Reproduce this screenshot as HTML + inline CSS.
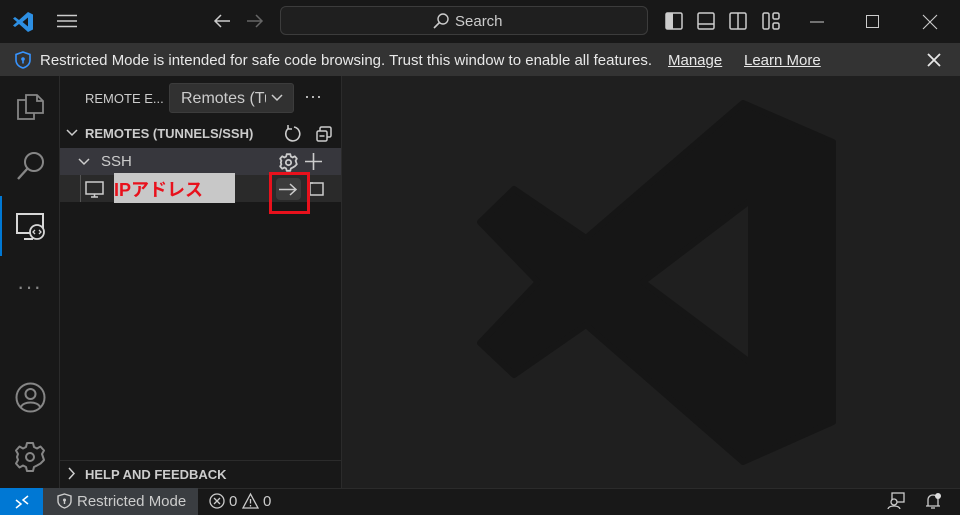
<!DOCTYPE html>
<html><head><meta charset="utf-8"><style>
*{margin:0;padding:0;box-sizing:border-box}
body{width:960px;height:515px;overflow:hidden;background:#1f1f1f;font-family:"Liberation Sans","Noto Sans CJK JP",sans-serif;color:#ccc;position:relative}
.a{position:absolute}
svg{position:absolute;overflow:visible}
</style></head><body>
<!-- title bar -->
<div class="a" style="left:0;top:0;width:960px;height:43px;background:#181818"></div>
<svg style="left:12px;top:11px" width="22" height="22" viewBox="0 0 22 22"><path d="M16 1 L21 3.5 V18.5 L16 21 L7 13 L3 16 L1 14.5 L5 11 L1 7.5 L3 6 L7 9 Z M16 6.5 L10.5 11 L16 15.5 Z" fill="#2d8fe3" fill-rule="evenodd"/></svg>
<svg style="left:57px;top:14px" width="20" height="14"><path d="M0 1.5H20M0 7H20M0 12.5H20" stroke="#ccc" stroke-width="1.6"/></svg>
<svg style="left:213px;top:14px" width="18" height="14"><path d="M17 7H2M8 1L2 7L8 13" stroke="#ccc" stroke-width="1.5" fill="none"/></svg>
<svg style="left:246px;top:14px" width="18" height="14"><path d="M1 7H16M10 1L16 7L10 13" stroke="#666" stroke-width="1.5" fill="none"/></svg>
<div class="a" style="left:280px;top:6px;width:368px;height:29px;border:1px solid #3c3c3c;border-radius:6px;background:#1f1f1f"></div>
<svg style="left:433px;top:13px" width="16" height="16"><circle cx="10" cy="6" r="5" stroke="#ccc" stroke-width="1.4" fill="none"/><path d="M6.5 9.5L1 15" stroke="#ccc" stroke-width="1.6"/></svg>
<div class="a" style="left:455px;top:13px;font-size:15px;color:#ccc">Search</div>
<svg style="left:665px;top:12px" width="18" height="18"><rect x="1" y="1" width="16" height="16" rx="1.5" stroke="#ccc" stroke-width="1.5" fill="none"/><rect x="1" y="1" width="7" height="16" fill="#ccc"/></svg>
<svg style="left:697px;top:12px" width="18" height="18"><rect x="1" y="1" width="16" height="16" rx="1.5" stroke="#ccc" stroke-width="1.5" fill="none"/><path d="M1 12H17" stroke="#ccc" stroke-width="1.5"/></svg>
<svg style="left:729px;top:12px" width="18" height="18"><rect x="1" y="1" width="16" height="16" rx="1.5" stroke="#ccc" stroke-width="1.5" fill="none"/><path d="M9 1V17" stroke="#ccc" stroke-width="1.5"/></svg>
<svg style="left:762px;top:12px" width="18" height="18"><rect x="1" y="1" width="6" height="16" rx="1.5" stroke="#ccc" stroke-width="1.5" fill="none"/><rect x="11" y="1" width="6" height="6" rx="1.5" stroke="#ccc" stroke-width="1.5" fill="none"/><rect x="11" y="11" width="6" height="6" rx="1.5" stroke="#ccc" stroke-width="1.5" fill="none"/></svg>
<svg style="left:810px;top:21px" width="14" height="2"><path d="M0 1H14" stroke="#ccc" stroke-width="1"/></svg>
<svg style="left:866px;top:15px" width="13" height="13"><rect x="0.5" y="0.5" width="12" height="12" stroke="#ccc" fill="none"/></svg>
<svg style="left:923px;top:15px" width="14" height="14"><path d="M0 0L14 14M14 0L0 14" stroke="#ccc" stroke-width="1.1"/></svg>
<!-- banner -->
<div class="a" style="left:0;top:43px;width:960px;height:33px;background:#333"></div>
<svg style="left:14px;top:51px" width="18" height="18"><path d="M9 1L16 3.5V9C16 13 13 16 9 17C5 16 2 13 2 9V3.5Z" stroke="#3794ff" stroke-width="1.6" fill="none"/><circle cx="9" cy="8" r="1.8" fill="#3794ff"/><path d="M9 9V12.5" stroke="#3794ff" stroke-width="1.6"/></svg>
<div class="a" style="left:40px;top:52px;font-size:15px;color:#e8e8e8">Restricted Mode is intended for safe code browsing. Trust this window to enable all features.</div>
<div class="a" style="left:668px;top:52px;font-size:15px;color:#e8e8e8;text-decoration:underline">Manage</div>
<div class="a" style="left:744px;top:52px;font-size:15px;color:#e8e8e8;text-decoration:underline">Learn More</div>
<svg style="left:928px;top:54px" width="12" height="12"><path d="M0 0L12 12M12 0L0 12" stroke="#e8e8e8" stroke-width="1.8"/></svg>
<!-- activity bar -->
<div class="a" style="left:0;top:76px;width:60px;height:412px;background:#181818;border-right:1px solid #2b2b2b"></div>
<svg style="left:16px;top:90px" width="28" height="30"><path d="M10 5H21L27 11V23H10Z M21 5V11H27" stroke="#868686" stroke-width="1.8" fill="none"/><path d="M10 10H2V29H18V23" stroke="#868686" stroke-width="1.8" fill="none"/></svg>
<svg style="left:16px;top:150px" width="30" height="32"><circle cx="18" cy="12" r="9" stroke="#868686" stroke-width="2" fill="none"/><path d="M11.5 18.5L2 29" stroke="#868686" stroke-width="2.4"/></svg>
<div class="a" style="left:0;top:196px;width:2px;height:60px;background:#0078d4"></div>
<svg style="left:16px;top:212px" width="30" height="30"><rect x="1" y="2" width="26" height="19" stroke="#d7d7d7" stroke-width="2" fill="none"/><path d="M8 27H17" stroke="#d7d7d7" stroke-width="2"/><circle cx="21" cy="20" r="7" fill="#181818" stroke="#d7d7d7" stroke-width="1.8"/><path d="M19 18L17 20L19 22M23 18L25 20L23 22" stroke="#d7d7d7" stroke-width="1.3" fill="none"/></svg>
<div class="a" style="left:17px;top:274px;font-size:22px;color:#868686;letter-spacing:1px">···</div>
<svg style="left:15px;top:382px" width="31" height="31"><circle cx="15.5" cy="15.5" r="14" stroke="#868686" stroke-width="2" fill="none"/><circle cx="15.5" cy="12" r="5" stroke="#868686" stroke-width="2" fill="none"/><path d="M6 25C8 19 23 19 25 25" stroke="#868686" stroke-width="2" fill="none"/></svg>
<svg style="left:14px;top:441px" width="32" height="32" viewBox="0 0 32 32"><path d="M13 2H19L20 6L23 7.5L26.5 5.5L30 9.5L28 13L29 16L30 19L26.5 22.5L23 24.5L20 26L19 30H13L12 26L9 24.5L5.5 26.5L2 22.5L4 19L3 16L4 13L2 9.5L5.5 5.5L9 7.5L12 6Z" stroke="#868686" stroke-width="2" fill="none" stroke-linejoin="round"/><circle cx="16" cy="16" r="4" stroke="#868686" stroke-width="2" fill="none"/></svg>
<!-- sidebar -->
<div class="a" style="left:60px;top:76px;width:282px;height:412px;background:#181818;border-right:1px solid #2b2b2b"></div>
<div class="a" style="left:85px;top:91px;font-size:13px;color:#ccc">REMOTE E...</div>
<div class="a" style="left:169px;top:83px;width:125px;height:30px;background:#313131;border:1px solid #3c3c3c;border-radius:3px;overflow:hidden"><span style="position:absolute;left:11px;top:6px;font-size:16px;color:#ccc;white-space:nowrap;width:85px;overflow:hidden">Remotes (Tunnels</span></div>
<svg style="left:271px;top:94px" width="12" height="8"><path d="M1 1L6 6L11 1" stroke="#ccc" stroke-width="1.5" fill="none"/></svg>
<div class="a" style="left:304px;top:86px;font-size:18px;color:#ccc">···</div>
<svg style="left:66px;top:129px" width="12" height="8"><path d="M1 1L6 6L11 1" stroke="#ccc" stroke-width="1.5" fill="none"/></svg>
<div class="a" style="left:85px;top:126px;font-size:13px;font-weight:bold;color:#ccc">REMOTES (TUNNELS/SSH)</div>
<svg style="left:285px;top:125px" width="16" height="17"><path d="M4 3A7 7 0 1 0 9 2" stroke="#ccc" stroke-width="1.6" fill="none"/><path d="M3 0V4H7" stroke="#ccc" stroke-width="1.5" fill="none"/></svg>
<svg style="left:316px;top:126px" width="16" height="16"><rect x="4" y="1" width="11" height="10" rx="1.5" stroke="#ccc" stroke-width="1.5" fill="none"/><rect x="1" y="5" width="10" height="10" rx="1.5" stroke="#ccc" stroke-width="1.5" fill="#181818"/><path d="M3.5 10H8.5" stroke="#ccc" stroke-width="1.5"/></svg>
<div class="a" style="left:60px;top:148px;width:281px;height:27px;background:#37373d"></div>
<svg style="left:78px;top:158px" width="12" height="8"><path d="M1 1L6 6L11 1" stroke="#ccc" stroke-width="1.5" fill="none"/></svg>
<div class="a" style="left:101px;top:153px;font-size:15px;color:#ccc">SSH</div>
<svg style="left:279px;top:153px" width="19" height="19" viewBox="0 0 32 32"><path d="M13 2H19L20 6L23 7.5L26.5 5.5L30 9.5L28 13L29 16L30 19L26.5 22.5L23 24.5L20 26L19 30H13L12 26L9 24.5L5.5 26.5L2 22.5L4 19L3 16L4 13L2 9.5L5.5 5.5L9 7.5L12 6Z" stroke="#ccc" stroke-width="3" fill="none" stroke-linejoin="round"/><circle cx="16" cy="16" r="4.5" stroke="#ccc" stroke-width="3" fill="none"/></svg>
<svg style="left:305px;top:153px" width="17" height="17"><path d="M8.5 0V17M0 8.5H17" stroke="#ccc" stroke-width="1.6"/></svg>
<div class="a" style="left:60px;top:175px;width:281px;height:27px;background:#2a2a2a"></div>
<div class="a" style="left:80px;top:175px;width:1px;height:27px;background:#555"></div>
<svg style="left:85px;top:181px" width="19" height="17"><rect x="1" y="1" width="17" height="12" stroke="#ccc" stroke-width="1.5" fill="none"/><path d="M6 16H13M9.5 13V16" stroke="#ccc" stroke-width="1.5"/></svg>
<div class="a" style="left:114px;top:173px;width:121px;height:30px;background:#c8c8c8"></div>
<div class="a" style="left:114px;top:176px;font-size:18px;font-weight:bold;color:#e8111c">IPアドレス</div>
<div class="a" style="left:276px;top:178px;width:25px;height:22px;background:#3c3c3c;border-radius:4px"></div>
<svg style="left:279px;top:183px" width="19" height="13"><path d="M0 6.5H17M11 1L17 6.5L11 12" stroke="#ccc" stroke-width="1.5" fill="none"/></svg>
<svg style="left:306px;top:181px" width="18" height="16"><rect x="4" y="2" width="13" height="12" stroke="#ccc" stroke-width="1.5" fill="none"/><path d="M1 2H7" stroke="#ccc" stroke-width="1.5"/></svg>
<div class="a" style="left:269px;top:172px;width:41px;height:42px;border:3px solid #e8111c"></div>
<div class="a" style="left:60px;top:460px;width:281px;height:1px;background:#2b2b2b"></div>
<svg style="left:68px;top:467px" width="8" height="13"><path d="M1 1L6 6.5L1 12" stroke="#ccc" stroke-width="1.5" fill="none"/></svg>
<div class="a" style="left:85px;top:467px;font-size:13px;font-weight:bold;color:#ccc">HELP AND FEEDBACK</div>
<!-- editor logo -->
<svg style="left:0;top:0" width="960" height="515"><path d="M743 103L833 142V422L743 462L586 325L514 375L480 343L538 282L480 222L514 189L586 238Z M751 200L643 282L751 363Z" fill="#161616" fill-rule="evenodd" stroke="#161616" stroke-width="6" stroke-linejoin="round"/></svg>
<!-- status bar -->
<div class="a" style="left:0;top:488px;width:960px;height:27px;background:#181818;border-top:1px solid #2b2b2b"></div>
<div class="a" style="left:0;top:488px;width:43px;height:27px;background:#0078d4"></div>
<svg style="left:15px;top:495px" width="14" height="14"><path d="M1 13L6 9L1 5M13 1L8 5L13 9" stroke="#fff" stroke-width="1.5" fill="none"/></svg>
<div class="a" style="left:43px;top:488px;width:155px;height:27px;background:#3a3d41"></div>
<svg style="left:57px;top:493px" width="15" height="16"><path d="M7.5 1L14 3V8C14 11.5 11 14 7.5 15C4 14 1 11.5 1 8V3Z" stroke="#ccc" stroke-width="1.4" fill="none"/><circle cx="7.5" cy="7" r="1.5" fill="#ccc"/><path d="M7.5 8V11" stroke="#ccc" stroke-width="1.4"/></svg>
<div class="a" style="left:77px;top:493px;font-size:15px;color:#ccc">Restricted Mode</div>
<svg style="left:209px;top:493px" width="16" height="16"><circle cx="8" cy="8" r="7" stroke="#ccc" stroke-width="1.3" fill="none"/><path d="M5 5L11 11M11 5L5 11" stroke="#ccc" stroke-width="1.3"/></svg>
<div class="a" style="left:229px;top:493px;font-size:15px;color:#ccc">0</div>
<svg style="left:242px;top:493px" width="17" height="16"><path d="M8.5 1L16 15H1Z" stroke="#ccc" stroke-width="1.3" fill="none"/><path d="M8.5 6V10.5M8.5 12V13.5" stroke="#ccc" stroke-width="1.3"/></svg>
<div class="a" style="left:263px;top:493px;font-size:15px;color:#ccc">0</div>
<svg style="left:887px;top:492px" width="18" height="18"><rect x="5" y="1" width="12" height="9" stroke="#ccc" stroke-width="1.3" fill="none"/><circle cx="7" cy="10" r="3" stroke="#ccc" stroke-width="1.3" fill="#181818"/><path d="M1 17C2 13 12 13 13 17" stroke="#ccc" stroke-width="1.3" fill="none"/></svg>
<svg style="left:925px;top:492px" width="18" height="18"><path d="M3 14V8C3 5 5 3 8 3C11 3 13 5 13 8V14H15H1Z" stroke="#ccc" stroke-width="1.3" fill="none"/><path d="M6 16H10" stroke="#ccc" stroke-width="1.3"/><circle cx="13" cy="4" r="3" fill="#ddd"/></svg>
</body></html>
